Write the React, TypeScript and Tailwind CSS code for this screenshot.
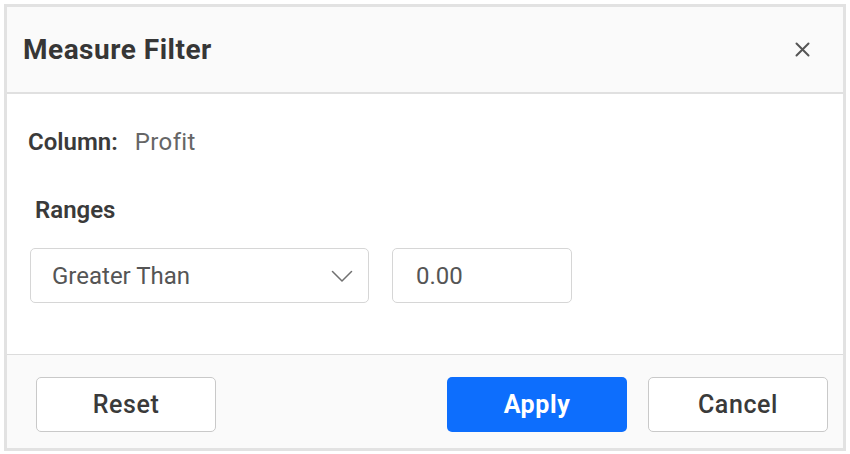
import React from "react";

const Chevron = () => (
  <svg width="22" height="12" viewBox="0 0 22 12" fill="none" stroke="#707070" strokeWidth="1.5" strokeLinecap="round" strokeLinejoin="round">
    <path d="M1.5 1.5l9.5 9.5 9.5-9.5" />
  </svg>
);

const CloseIcon = () => (
  <svg width="15" height="15" viewBox="0 0 15 15" fill="none" stroke="#555" strokeWidth="2" strokeLinecap="round">
    <path d="M1.5 1.5l12 12M13.5 1.5l-12 12" />
  </svg>
);

export default function App() {
  return (
    <div className="w-[850px] h-[454px] bg-white pt-[4px] pl-[4px] font-['Roboto',sans-serif]">
      <div className="w-[842px] h-[447px] border-[3px] border-[#e2e2e2] flex flex-col">
        <div className="h-[87px] bg-[#fafafa] border-b-2 border-[#e0e0e0] flex items-center justify-between pl-[16px] pr-[29px] shrink-0">
          <h1 className="text-[28px] font-bold tracking-[0.5px] text-[#363636]">Measure Filter</h1>
          <button className="w-[24px] h-[24px] flex items-center justify-center">
            <CloseIcon />
          </button>
        </div>

        <div className="h-[260px] bg-white flex flex-col pl-[21px] shrink-0">
          <div className="mt-[30px] text-[24px] text-[#3a3a3a] flex gap-[17px]">
            <span className="font-semibold">Column:</span>
            <span className="text-[#666] tracking-[0.4px]">Profit</span>
          </div>
          <div className="mt-[32px] ml-[7px] text-[24px] font-semibold text-[#3a3a3a]">Ranges</div>
          <div className="mt-[20px] ml-[2px] flex gap-[23px]">
            <div className="w-[339px] h-[55px] border border-[#d6d6d6] rounded-[5px] flex items-center justify-between pl-[21px] pr-[15px]">
              <span className="text-[24px] text-[#555]">Greater Than</span>
              <Chevron />
            </div>
            <div className="w-[180px] h-[55px] border border-[#d6d6d6] rounded-[5px] flex items-center pl-[23px]">
              <span className="text-[24px] text-[#555]">0.00</span>
            </div>
          </div>
        </div>

        <div className="flex-1 bg-[#fafafa] border-t border-[#dcdcdc] flex items-start pt-[22px] pl-[29px] pr-[15px]">
          <button className="w-[180px] h-[55px] bg-white border border-[#c9c9c9] rounded-[5px] text-[25px] font-medium tracking-[0.6px] text-[#3a3a3a]">
            Reset
          </button>
          <div className="ml-auto flex gap-[21px]">
            <button className="w-[180px] h-[55px] bg-[#0d6efd] rounded-[5px] text-[25px] font-bold tracking-[0.6px] text-white">
              Apply
            </button>
            <button className="w-[180px] h-[55px] bg-white border border-[#c9c9c9] rounded-[5px] text-[25px] font-medium tracking-[0.6px] text-[#3a3a3a]">
              Cancel
            </button>
          </div>
        </div>
      </div>
    </div>
  );
}
